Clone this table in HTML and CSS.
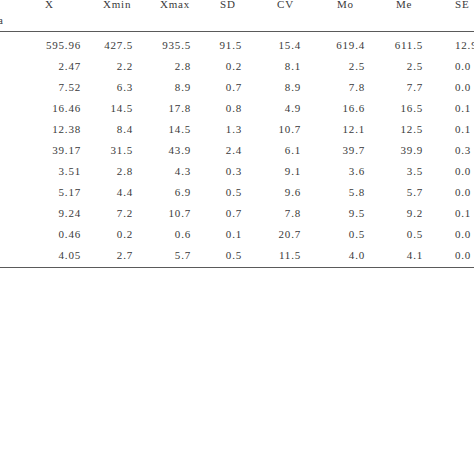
FILE: index.html
```html
<!DOCTYPE html>
<html>
<head>
<meta charset="utf-8">
<link rel="stylesheet" href="styles.css">
</head>
<body>
<div class="table">
  <div class="head row">
    <div class="label">a</div>
    <div class="h">X</div><div class="h">Xmin</div><div class="h">Xmax</div><div class="h">SD</div>
    <div class="h">CV</div><div class="h">Mo</div><div class="h">Me</div><div class="h">SE</div>
  </div>
  <div class="body">
    <div class="row"><div class="label"></div><div>595.96</div><div>427.5</div><div>935.5</div><div>91.5</div><div>15.4</div><div>619.4</div><div>611.5</div><div>12.9</div></div>
    <div class="row"><div class="label"></div><div>2.47</div><div>2.2</div><div>2.8</div><div>0.2</div><div>8.1</div><div>2.5</div><div>2.5</div><div>0.0</div></div>
    <div class="row"><div class="label"></div><div>7.52</div><div>6.3</div><div>8.9</div><div>0.7</div><div>8.9</div><div>7.8</div><div>7.7</div><div>0.0</div></div>
    <div class="row"><div class="label"></div><div>16.46</div><div>14.5</div><div>17.8</div><div>0.8</div><div>4.9</div><div>16.6</div><div>16.5</div><div>0.1</div></div>
    <div class="row"><div class="label"></div><div>12.38</div><div>8.4</div><div>14.5</div><div>1.3</div><div>10.7</div><div>12.1</div><div>12.5</div><div>0.1</div></div>
    <div class="row"><div class="label"></div><div>39.17</div><div>31.5</div><div>43.9</div><div>2.4</div><div>6.1</div><div>39.7</div><div>39.9</div><div>0.3</div></div>
    <div class="row"><div class="label"></div><div>3.51</div><div>2.8</div><div>4.3</div><div>0.3</div><div>9.1</div><div>3.6</div><div>3.5</div><div>0.0</div></div>
    <div class="row"><div class="label"></div><div>5.17</div><div>4.4</div><div>6.9</div><div>0.5</div><div>9.6</div><div>5.8</div><div>5.7</div><div>0.0</div></div>
    <div class="row"><div class="label"></div><div>9.24</div><div>7.2</div><div>10.7</div><div>0.7</div><div>7.8</div><div>9.5</div><div>9.2</div><div>0.1</div></div>
    <div class="row"><div class="label"></div><div>0.46</div><div>0.2</div><div>0.6</div><div>0.1</div><div>20.7</div><div>0.5</div><div>0.5</div><div>0.0</div></div>
    <div class="row"><div class="label"></div><div>4.05</div><div>2.7</div><div>5.7</div><div>0.5</div><div>11.5</div><div>4.0</div><div>4.1</div><div>0.0</div></div>
  </div>
</div>
</body>
</html>
```
FILE: styles.css
```css
html, body {
  margin: 0;
  padding: 0;
  background: #ffffff;
  overflow: hidden;
}
body {
  width: 474px;
  height: 474px;
  font-family: "Liberation Serif", "Times New Roman", serif;
  font-size: 11px;
  color: #3a3a3a;
  letter-spacing: 0.8px;
}
.table {
  margin-top: -3px;
}
.row {
  display: grid;
  grid-template-columns: 40px 44px 52px 58px 51px 59px 64px 58px 48px;
}
.head {
  height: 34px;
  border-bottom: 1px solid #5a5a5a;
}
.head .h {
  align-self: start;
  line-height: 14px;
  text-align: left;
}
.head .label {
  align-self: end;
  line-height: 14px;
  padding-bottom: 4px;
  margin-left: -2px;
}
.head .h:nth-child(2) { padding-left: 5px; }
.head .h:nth-child(3) { padding-left: 19px; }
.head .h:nth-child(4) { padding-left: 24px; }
.head .h:nth-child(5) { padding-left: 26px; }
.head .h:nth-child(6) { padding-left: 32px; }
.head .h:nth-child(7) { padding-left: 33px; }
.head .h:nth-child(8) { padding-left: 28px; }
.head .h:nth-child(9) { padding-left: 29px; }
.body {
  padding-top: 3px;
  padding-bottom: 1px;
  border-bottom: 1px solid #5a5a5a;
}
.body .row {
  height: 21px;
  line-height: 21px;
}
.body .row > div {
  text-align: right;
  padding-right: 3px;
}
.body .row > div:last-child {
  text-align: left;
  padding-left: 29px;
  padding-right: 0;
  white-space: nowrap;
}
```
